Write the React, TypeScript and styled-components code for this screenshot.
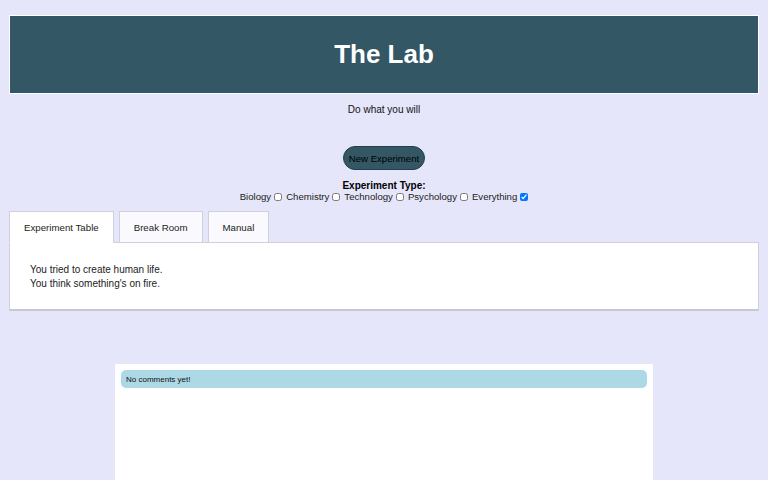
import React, { useState } from "react";
import styled, { createGlobalStyle } from "styled-components";

const GlobalStyle = createGlobalStyle`
	html, body {
		margin: 0;
		padding: 0;
		background: #e6e6fa;
		font-family: "Liberation Sans", Arial, sans-serif;
		height: 100%;
		overflow: hidden;
	}
`;

const tabs = ["Experiment Table", "Break Room", "Manual"];
const types = ["Biology", "Chemistry", "Technology", "Psychology", "Everything"];

const App: React.FC = () => {
	const [active, setActive] = useState<number>(0);
	const [checked, setChecked] = useState<string>("Everything");

	return (
		<Page>
			<GlobalStyle />
			<Header>
				<Title>The Lab</Title>
			</Header>
			<Tagline>Do what you will</Tagline>
			<NewButton>New Experiment</NewButton>
			<TypeLabel>Experiment Type:</TypeLabel>
			<TypeRow>
				{types.map((t) => (
					<TypeOption key={t}>
						{t}
						<Check
							type="checkbox"
							checked={checked === t}
							onChange={() => setChecked(t)}
						/>
					</TypeOption>
				))}
			</TypeRow>
			<TabBar>
				{tabs.map((t, i) => (
					<Tab key={t} $active={active === i} onClick={() => setActive(i)}>
						{t}
					</Tab>
				))}
			</TabBar>
			<Panel>
				<Line>You tried to create human life.</Line>
				<Line>You think something's on fire.</Line>
			</Panel>
			<Comments>
				<CommentBar>No comments yet!</CommentBar>
			</Comments>
		</Page>
	);
};

export default App;

const Page = styled.div`
	padding: 15px 9px 0 9px;
	display: flex;
	flex-direction: column;
	align-items: center;
`;

const Header = styled.div`
	box-sizing: border-box;
	width: 750px;
	height: 79px;
	background: #335764;
	border: 1px solid #fff;
	display: flex;
	justify-content: center;
	align-items: center;
`;

const Title = styled.h1`
	margin: 0;
	color: #fff;
	font-size: 26px;
	font-weight: bold;
`;

const Tagline = styled.div`
	margin-top: 10px;
	font-size: 10px;
	color: #111;
	line-height: 12px;
`;

const NewButton = styled.button`
	margin-top: 30px;
	height: 24px;
	padding: 0 5px;
	border-radius: 12px;
	border: 1px solid #253f48;
	background: #335764;
	color: #000;
	font-family: "Liberation Sans", Arial, sans-serif;
	font-size: 9.6px;
	cursor: pointer;
`;

const TypeLabel = styled.div`
	margin-top: 10px;
	font-size: 10px;
	font-weight: bold;
	line-height: 11px;
`;

const TypeRow = styled.div`
	display: flex;
	gap: 4px;
	font-size: 9.6px;
	line-height: 11px;
	color: #222;
`;

const TypeOption = styled.label`
	display: flex;
	align-items: center;
	gap: 2px;
`;

const Check = styled.input`
	width: 8px;
	height: 8px;
	margin: 0 0 0 1px;
`;

const TabBar = styled.div`
	align-self: stretch;
	display: flex;
	gap: 5px;
	margin-top: 9px;
	position: relative;
	z-index: 1;
	margin-bottom: -1px;
`;

const Tab = styled.div<{ $active: boolean }>`
	box-sizing: border-box;
	height: 32px;
	padding: 0 14px;
	display: flex;
	align-items: center;
	background: ${(p) => (p.$active ? "#fff" : "#fafafe")};
	border: 1px solid #cfcfe0;
	border-bottom: ${(p) => (p.$active ? "1px solid #fff" : "1px solid #cfcfe0")};
	font-size: 9.7px;
	color: #222;
	cursor: pointer;
`;

const Panel = styled.div`
	box-sizing: border-box;
	align-self: stretch;
	height: 69px;
	background: #fff;
	border: 1px solid #d0d0dc;
	border-bottom: 2px solid #c8c8d4;
	padding: 20px 20px;
	font-size: 10px;
	color: #222;
`;

const Line = styled.div`
	line-height: 14px;
`;

const Comments = styled.div`
	box-sizing: border-box;
	margin-top: 53px;
	width: 538px;
	height: 140px;
	background: #fff;
	padding: 6px;
`;

const CommentBar = styled.div`
	height: 18px;
	border-radius: 5px;
	background: #add8e6;
	padding: 0 5px;
	display: flex;
	align-items: center;
	font-size: 8px;
	color: #111;
`;
